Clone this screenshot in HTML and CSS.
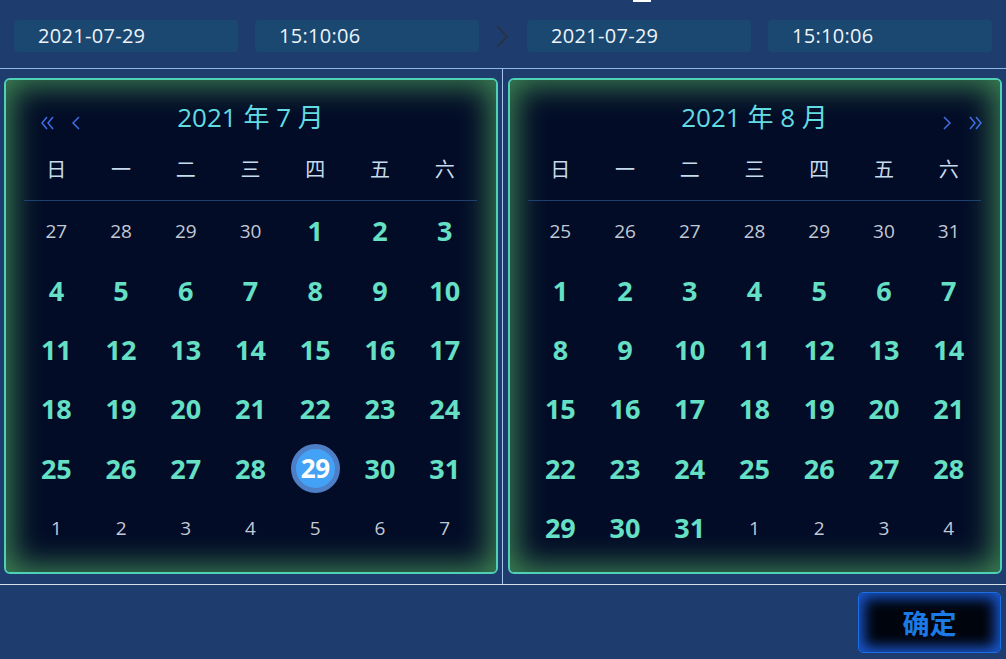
FILE: index.html
```html
<!DOCTYPE html>
<html lang="zh">
<head>
<meta charset="utf-8">
<title>日期时间范围</title>
<link rel="stylesheet" href="styles.css">
</head>
<body>
<div class="picker">
  <span class="pop-arrow"></span>
  <div class="top">
    <div class="group">
      <div class="field">2021-07-29</div>
      <div class="field">15:10:06</div>
    </div>
    <div class="sep">
      <svg width="12" height="23" viewBox="0 0 12 23"><polyline points="1,1 11,11.5 1,22" fill="none" stroke="#2a323e" stroke-width="1.8"/></svg>
    </div>
    <div class="group">
      <div class="field">2021-07-29</div>
      <div class="field">15:10:06</div>
    </div>
  </div>

  <div class="panels">
    <div class="half left">
      <div class="cal">
        <div class="cal-head">
          <div class="nav nav-left">
            <svg width="13" height="14" viewBox="0 0 13 14"><polyline points="6,1 1,7 6,13" fill="none" stroke="#3d6fe6" stroke-width="1.5"/><polyline points="12,1 7,7 12,13" fill="none" stroke="#3d6fe6" stroke-width="1.5"/></svg>
            <svg width="8" height="14" viewBox="0 0 8 14"><polyline points="7,1 1,7 7,13" fill="none" stroke="#3d6fe6" stroke-width="1.5"/></svg>
          </div>
          <div class="title">2021 年 7 月</div>
          <div class="nav nav-right"></div>
        </div>
        <div class="week"><span>日</span><span>一</span><span>二</span><span>三</span><span>四</span><span>五</span><span>六</span></div>
        <div class="days">
          <span class="d other">27</span><span class="d other">28</span><span class="d other">29</span><span class="d other">30</span><span class="d">1</span><span class="d">2</span><span class="d">3</span>
          <span class="d">4</span><span class="d">5</span><span class="d">6</span><span class="d">7</span><span class="d">8</span><span class="d">9</span><span class="d">10</span>
          <span class="d">11</span><span class="d">12</span><span class="d">13</span><span class="d">14</span><span class="d">15</span><span class="d">16</span><span class="d">17</span>
          <span class="d">18</span><span class="d">19</span><span class="d">20</span><span class="d">21</span><span class="d">22</span><span class="d">23</span><span class="d">24</span>
          <span class="d">25</span><span class="d">26</span><span class="d">27</span><span class="d">28</span><span class="d"><span class="sel">29</span></span><span class="d">30</span><span class="d">31</span>
          <span class="d other">1</span><span class="d other">2</span><span class="d other">3</span><span class="d other">4</span><span class="d other">5</span><span class="d other">6</span><span class="d other">7</span>
        </div>
      </div>
    </div>
    <div class="half right">
      <div class="cal">
        <div class="cal-head">
          <div class="nav nav-left"></div>
          <div class="title">2021 年 8 月</div>
          <div class="nav nav-right">
            <svg width="8" height="14" viewBox="0 0 8 14"><polyline points="1,1 7,7 1,13" fill="none" stroke="#3d6fe6" stroke-width="1.5"/></svg>
            <svg width="13" height="14" viewBox="0 0 13 14"><polyline points="1,1 6,7 1,13" fill="none" stroke="#3d6fe6" stroke-width="1.5"/><polyline points="7,1 12,7 7,13" fill="none" stroke="#3d6fe6" stroke-width="1.5"/></svg>
          </div>
        </div>
        <div class="week"><span>日</span><span>一</span><span>二</span><span>三</span><span>四</span><span>五</span><span>六</span></div>
        <div class="days">
          <span class="d other">25</span><span class="d other">26</span><span class="d other">27</span><span class="d other">28</span><span class="d other">29</span><span class="d other">30</span><span class="d other">31</span>
          <span class="d">1</span><span class="d">2</span><span class="d">3</span><span class="d">4</span><span class="d">5</span><span class="d">6</span><span class="d">7</span>
          <span class="d">8</span><span class="d">9</span><span class="d">10</span><span class="d">11</span><span class="d">12</span><span class="d">13</span><span class="d">14</span>
          <span class="d">15</span><span class="d">16</span><span class="d">17</span><span class="d">18</span><span class="d">19</span><span class="d">20</span><span class="d">21</span>
          <span class="d">22</span><span class="d">23</span><span class="d">24</span><span class="d">25</span><span class="d">26</span><span class="d">27</span><span class="d">28</span>
          <span class="d">29</span><span class="d">30</span><span class="d">31</span><span class="d other">1</span><span class="d other">2</span><span class="d other">3</span><span class="d other">4</span>
        </div>
      </div>
    </div>
  </div>

  <div class="footer">
    <button class="ok">确定</button>
  </div>
</div>
</body>
</html>
```

FILE: styles.css
```css
html, body {
  margin: 0;
  padding: 0;
}
body {
  background: #1e3d6e;
  font-family: "Open Sans", "Noto Sans CJK SC", sans-serif;
  width: 1006px;
  height: 659px;
  overflow: hidden;
}
.picker {
  position: relative;
  width: 1006px;
  height: 659px;
  display: flex;
  flex-direction: column;
}
.pop-arrow {
  position: absolute;
  left: 633px;
  top: 0;
  width: 18px;
  height: 2px;
  background: #ffffff;
}
.top {
  box-sizing: border-box;
  height: 69px;
  padding: 20px 0 0 14px;
  border-bottom: 1px solid #8fb8e6;
  display: flex;
  align-items: flex-start;
}
.group {
  display: flex;
  gap: 17px;
}
.field {
  box-sizing: border-box;
  width: 224px;
  height: 32px;
  border-radius: 4px;
  background: #1b4870;
  color: #eef4fa;
  font-size: 20px;
  line-height: 32px;
  padding-left: 24px;
  letter-spacing: 0.3px;
}
.sep {
  width: 48px;
  height: 32px;
  display: flex;
  align-items: center;
  justify-content: center;
  padding-right: 2px;
  box-sizing: border-box;
}
.panels {
  display: flex;
  height: 515px;
  border-bottom: 1px solid #d6deea;
}
.half {
  box-sizing: border-box;
  padding: 9px 4px;
}
.half.left {
  width: 503px;
  border-right: 1px solid #a6c6ee;
}
.half.right {
  flex: 1;
  padding-left: 5px;
}
.cal {
  box-sizing: border-box;
  width: 494px;
  height: 496px;
  border: 2px solid #4fd1b4;
  border-radius: 6px;
  background: #030c27;
  box-shadow: inset 0 0 30px 6px #3d8253;
  padding: 17px 19px 0 18px;
}
.cal-head {
  height: 40px;
  display: grid;
  grid-template-columns: 1fr auto 1fr;
  align-items: center;
}
.title {
  color: #62dbe3;
  font-size: 26px;
  line-height: 40px;
}
.nav {
  display: flex;
  align-items: center;
  margin-top: 12px;
}
.nav-left {
  padding-left: 17px;
  gap: 18px;
}
.nav-right {
  justify-content: flex-end;
  gap: 18px;
  margin-right: -1px;
}
.nav svg {
  display: block;
}
.week {
  height: 63px;
  border-bottom: 1px solid #1e3f72;
  display: grid;
  grid-template-columns: repeat(7, 1fr);
  align-items: center;
  text-align: center;
  color: #c6dbec;
  font-size: 20px;
}
.days {
  display: grid;
  grid-template-columns: repeat(7, 1fr);
  grid-auto-rows: 59.4px;
}
.d {
  display: flex;
  align-items: center;
  justify-content: center;
  color: #66e0c5;
  font-size: 27px;
  font-weight: 700;
}
.d.other {
  color: #c2c9d6;
  font-size: 19px;
  font-weight: 400;
}
.sel {
  box-sizing: border-box;
  width: 49px;
  height: 49px;
  border-radius: 50%;
  border: 5px solid #4e7fc6;
  background: #43a2f5;
  color: #ffffff;
  display: flex;
  align-items: center;
  justify-content: center;
  font-size: 26px;
  letter-spacing: -0.5px;
}
.footer {
  flex: 1;
  display: flex;
  justify-content: flex-end;
  align-items: flex-start;
  padding: 7px 5px 0 0;
}
.ok {
  width: 143px;
  height: 61px;
  border: 1px solid #1b6fe2;
  border-radius: 5px;
  background: #00040c;
  box-shadow: inset 0 0 14px 5px #1a58cf;
  color: #1b7ae6;
  font-family: "Noto Sans CJK SC", sans-serif;
  font-size: 27px;
  font-weight: 700;
  padding: 0;
  cursor: pointer;
}
```
